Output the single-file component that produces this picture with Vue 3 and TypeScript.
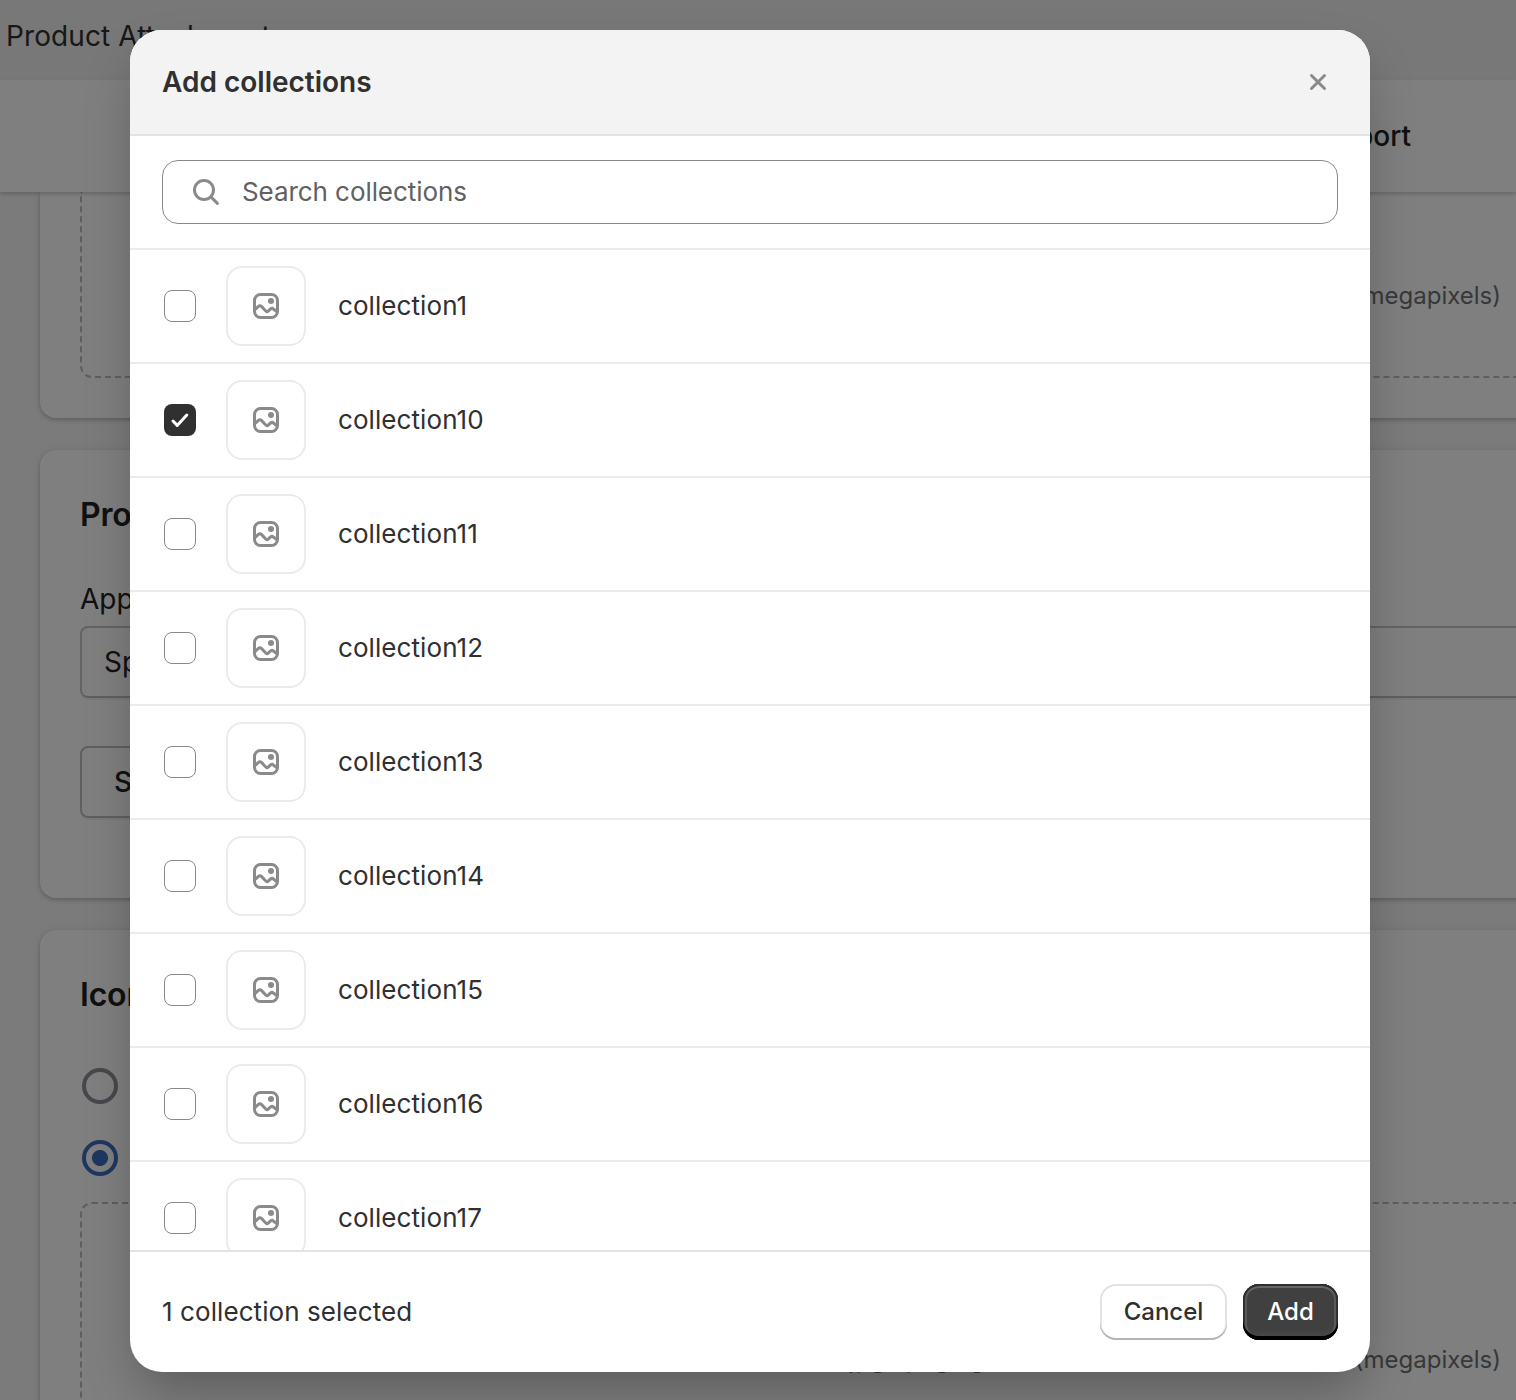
<script setup lang="ts">
import { ref, computed } from 'vue'

interface Collection {
  id: number
  title: string
  selected: boolean
}

const titles = [1, 10, 11, 12, 13, 14, 15, 16, 17]
const collections = ref<Collection[]>(
  titles.map((n) => ({ id: n, title: `collection${n}`, selected: n === 10 })),
)
const query = ref('')
const visible = computed(() => collections.value.filter((c) => c.title.includes(query.value.trim())))
const selectedCount = computed(() => collections.value.filter((c) => c.selected).length)
const hint = 'Allowed: .jpg, .png, .gif and less than 20 MB or 20 MP (megapixels)'
</script>

<template>
  <div class="app">
    <div class="page">
      <header class="topbar">Product Attachment</header>
      <nav class="nav"><span>Support</span></nav>
      <main class="content">
        <section class="card card-upload">
          <div class="dropzone"><span>{{ hint }}</span></div>
        </section>
        <section class="card card-products">
          <h2>Products</h2>
          <label class="field-label">Apply to</label>
          <div class="select">Specific collections</div>
          <div class="plain-button">Select collections</div>
        </section>
        <section class="card card-icon">
          <h2>Icon</h2>
          <div class="radio"></div>
          <div class="radio radio-on"></div>
          <div class="dropzone dropzone-tall"><span>{{ hint }}</span></div>
        </section>
      </main>
    </div>

    <div class="scrim">
      <div class="modal" role="dialog" aria-label="Add collections">
        <header class="modal-header">
          <h1>Add collections</h1>
          <svg class="close" viewBox="0 0 20 20"><path d="M6.75 6.75l6.5 6.5M13.25 6.75l-6.5 6.5" /></svg>
        </header>
        <div class="search-wrap">
          <div class="search">
            <svg class="search-icon" viewBox="0 0 20 20">
              <circle cx="9" cy="9" r="4.75" />
              <path d="M12.5 12.5l3.2 3.2" />
            </svg>
            <input v-model="query" type="text" placeholder="Search collections" />
          </div>
        </div>
        <ul class="list">
          <li v-for="c in visible" :key="c.id" class="row" @click="c.selected = !c.selected">
            <span class="checkbox" :class="{ checked: c.selected }">
              <svg v-if="c.selected" viewBox="0 0 32 32"><path d="M9 17l4.2 4.4L22.8 11" /></svg>
            </span>
            <span class="thumb">
              <svg viewBox="0 0 20 20">
                <rect x="4.25" y="4.25" width="11.5" height="11.5" rx="3" />
                <path d="M4.3 12l1.9-1.8a1.1 1.1 0 0 1 1.5 0l2.3 2.4a.8.8 0 0 0 1.1 0l1.2-1.1a1.1 1.1 0 0 1 1.4 0l2 1.6" />
                <circle cx="12.5" cy="7.5" r="1.5" />
              </svg>
            </span>
            <span class="title">{{ c.title }}</span>
          </li>
        </ul>
        <footer class="modal-footer">
          <span class="count">{{ selectedCount }} collection selected</span>
          <button class="btn cancel" type="button">Cancel</button>
          <button class="btn add" type="button">Add</button>
        </footer>
      </div>
    </div>
  </div>
</template>

<style>
body {
  margin: 0;
  overflow: hidden;
}
</style>

<style scoped>
* {
  box-sizing: border-box;
}
.app {
  position: relative;
  width: 1516px;
  height: 1400px;
  overflow: hidden;
  font-family: Inter, 'Liberation Sans', sans-serif;
  color: #202223;
}
.page {
  display: flex;
  flex-direction: column;
  height: 1400px;
  background: #f6f6f7;
}
.topbar {
  flex: none;
  height: 80px;
  padding-left: 6px;
  background: #f1f1f1;
  color: #303030;
  font-size: 28px;
  line-height: 73px;
  letter-spacing: 0.1px;
}
.nav {
  flex: none;
  position: relative;
  z-index: 1;
  display: flex;
  justify-content: flex-end;
  height: 112px;
  padding-right: 105px;
  background: #fff;
  box-shadow: 0 2px 4px rgba(0, 0, 0, 0.2);
  font-size: 28px;
  font-weight: 500;
  line-height: 112px;
}
.content {
  display: flex;
  flex-direction: column;
  gap: 32px;
  padding-left: 40px;
}
.card {
  flex: none;
  width: 1600px;
  padding-left: 40px;
  background: #fff;
  border-radius: 16px;
  box-shadow: 0 0 10px rgba(23, 24, 24, 0.07), 0 2px 4px rgba(0, 0, 0, 0.2);
}
.card-upload {
  height: 226px;
  border-radius: 0 0 16px 16px;
}
.card-products {
  height: 448px;
  padding-top: 45px;
}
.card-icon {
  height: 560px;
  padding-top: 45px;
}
.dropzone {
  display: flex;
  width: 1560px;
  height: 186px;
  padding: 84px 137px 0 0;
  justify-content: flex-end;
  border: 2px dashed #bbbcbe;
  border-top: 0;
  border-radius: 0 0 12px 12px;
  color: #6d7175;
  font-size: 24px;
  line-height: 40px;
  white-space: nowrap;
}
.dropzone-tall {
  height: 360px;
  margin-top: 26px;
  padding-top: 136px;
  border-top: 2px dashed #bbbcbe;
  border-radius: 12px;
}
h2 {
  margin: 0;
  font-size: 32px;
  font-weight: 600;
  line-height: 40px;
  letter-spacing: -0.2px;
}
.field-label {
  display: block;
  margin-top: 44px;
  font-size: 28px;
  line-height: 40px;
}
.select {
  width: 1560px;
  height: 72px;
  margin-top: 7px;
  padding-left: 22px;
  border: 2px solid #c4c6c8;
  border-bottom-color: #babfc3;
  border-radius: 8px;
  font-size: 28px;
  line-height: 68px;
  box-shadow: 0 2px 0 rgba(0, 0, 0, 0.05);
}
.plain-button {
  width: 320px;
  height: 72px;
  margin-top: 48px;
  padding-left: 32px;
  border: 2px solid #babfc3;
  border-radius: 8px;
  font-size: 28px;
  font-weight: 500;
  line-height: 68px;
  box-shadow: 0 2px 0 rgba(0, 0, 0, 0.05);
}
.radio {
  width: 36px;
  height: 36px;
  margin: 53px 0 0 2px;
  border: 4px solid #8c9196;
  border-radius: 50%;
}
.radio-on {
  margin-top: 36px;
  border-color: #3d6fc4;
  background: radial-gradient(circle, #3d6fc4 7.6px, #fff 8.4px);
}
.scrim {
  position: absolute;
  inset: 0;
  z-index: 2;
  padding: 30px 146px 28px 130px;
  background: rgba(0, 0, 0, 0.5);
}
.modal {
  display: flex;
  flex-direction: column;
  width: 1240px;
  height: 1342px;
  overflow: hidden;
  background: #fff;
  border-radius: 32px;
  color: #303030;
  box-shadow: 0 26px 52px -8px rgba(0, 0, 0, 0.28);
}
.modal-header {
  flex: none;
  display: flex;
  align-items: center;
  justify-content: space-between;
  height: 106px;
  padding: 0 32px;
  background: #f3f3f3;
  border-bottom: 2px solid #e3e3e3;
}
h1 {
  margin: 0;
  font-size: 28px;
  font-weight: 600;
  line-height: 40px;
}
.close {
  width: 40px;
  height: 40px;
}
.close path {
  fill: none;
  stroke: #8a8a8a;
  stroke-width: 1.5;
  stroke-linecap: round;
}
.search-wrap {
  flex: none;
  height: 114px;
  padding: 24px 32px;
  border-bottom: 2px solid #ebebeb;
}
.search {
  display: flex;
  align-items: center;
  gap: 16px;
  height: 64px;
  padding: 0 23px;
  border: 1px solid #8a8a8a;
  border-radius: 16px;
}
.search-icon {
  width: 40px;
  height: 40px;
  fill: none;
  stroke: #8a8a8a;
  stroke-width: 1.5;
  stroke-linecap: round;
}
.search input {
  flex: 1;
  height: 40px;
  padding: 0 0 1px;
  border: 0;
  outline: 0;
  background: none;
  color: #303030;
  font: 26px Inter, 'Liberation Sans', sans-serif;
  letter-spacing: -0.07px;
}
.search input::placeholder {
  color: #616161;
}
.list {
  flex: 1;
  min-height: 0;
  margin: 0;
  padding: 0;
  overflow: hidden;
  list-style: none;
}
.row {
  display: flex;
  align-items: center;
  height: 114px;
  padding-left: 34px;
  border-bottom: 2px solid #ebebeb;
}
.checkbox {
  width: 32px;
  height: 32px;
  border: 1px solid #8a8a8a;
  border-radius: 8px;
}
.checked {
  border: 0;
  background: #303030;
}
.checkbox svg {
  display: block;
  width: 32px;
  height: 32px;
  fill: none;
  stroke: #fff;
  stroke-width: 3;
  stroke-linecap: round;
  stroke-linejoin: round;
}
.thumb {
  display: flex;
  align-items: center;
  justify-content: center;
  width: 80px;
  height: 80px;
  margin: 0 32px 0 30px;
  border: 2px solid #ebebeb;
  border-radius: 16px;
}
.thumb svg {
  width: 40px;
  height: 40px;
  fill: none;
  stroke: #8a8a8a;
  stroke-width: 1.5;
}
.thumb circle {
  fill: #8a8a8a;
  stroke: none;
}
.title,
.count {
  font-size: 26px;
  line-height: 40px;
  letter-spacing: 0.08px;
}
.modal-footer {
  flex: none;
  display: flex;
  align-items: center;
  gap: 16px;
  height: 122px;
  padding: 0 32px;
  border-top: 2px solid #e3e3e3;
}
.count {
  flex: 1;
}
.btn {
  height: 56px;
  padding: 0;
  border: 0;
  border-radius: 16px;
  font: 500 24px/54px Inter, 'Liberation Sans', sans-serif;
}
.cancel {
  width: 127px;
  background: #fff;
  color: #303030;
  box-shadow: inset 0 -2px 0 #b5b5b5, inset 0 0 0 2px #e3e3e3;
}
.add {
  width: 95px;
  background: linear-gradient(180deg, #404040 80%, #4c4c4c 100%);
  color: #fff;
  box-shadow: inset 0 2px 0 #303030, inset 0 -4px 0 #000, inset 0 0 0 2px #303030,
    inset 0 4px 0 #666, inset 0 0 0 4px #5a5a5a;
}
</style>
